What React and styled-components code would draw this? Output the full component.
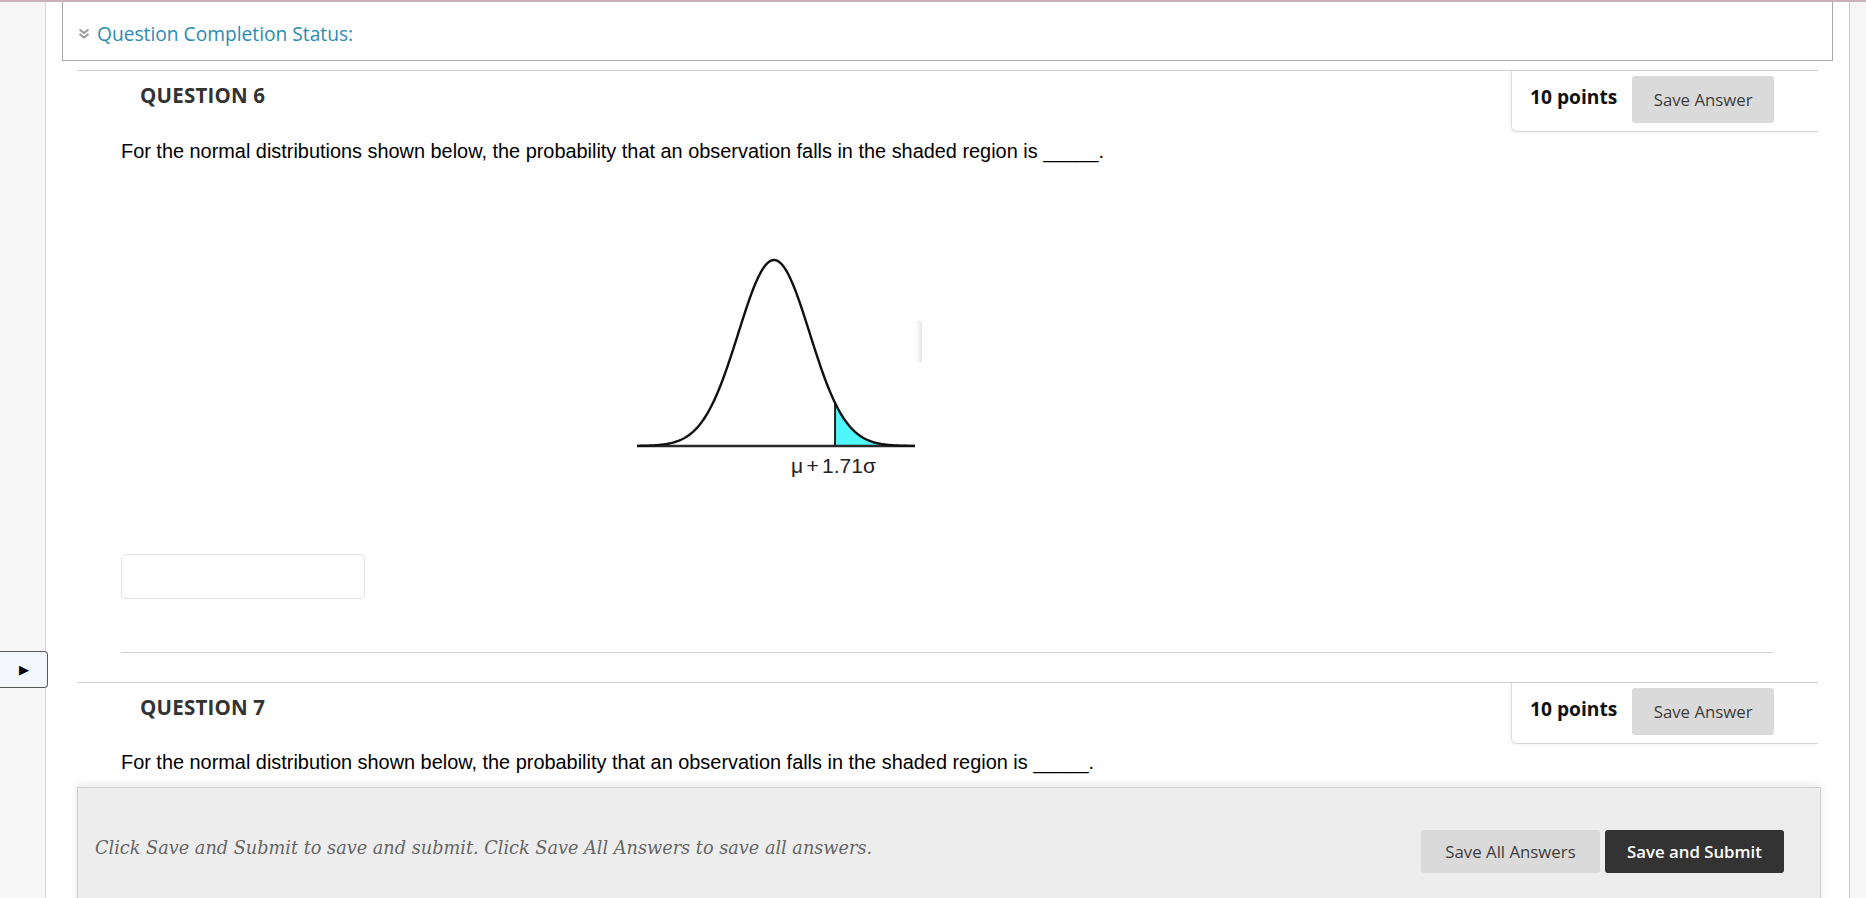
import React from "react";
import styled, { createGlobalStyle } from "styled-components";

const GlobalStyle = createGlobalStyle`
  html, body { margin: 0; padding: 0; background: #ffffff; }
  body { font-family: "Open Sans", "Liberation Sans", sans-serif; }
  * { box-sizing: border-box; }
`;

const Page = styled.div`
  position: relative;
  display: flex;
  height: 898px;
  overflow: hidden;
  border-top: 2px solid #cbb0ba;
`;

const LeftRail = styled.aside`
  position: relative;
  width: 46px;
  flex: 0 0 46px;
  background: #f6f6f6;
  border-right: 1px solid #d9d9d9;
`;

const RightRail = styled.aside`
  width: 17px;
  flex: 0 0 17px;
  background: #f6f6f6;
  border-left: 1px solid #cfcfcf;
`;

const RailToggle = styled.button`
  position: absolute;
  top: 649px;
  left: 0;
  width: 48px;
  height: 37px;
  padding: 0;
  background: #f4f7fb;
  border: 1px solid #5a5a5a;
  border-left: none;
  border-radius: 0 4px 4px 0;
  display: flex;
  align-items: center;
  justify-content: center;
  color: #000;
  font-size: 13px;
  cursor: pointer;
`;

const Main = styled.main`
  flex: 1;
  min-width: 0;
  display: flex;
  flex-direction: column;
  & > * { flex-shrink: 0; }
`;

const StatusBox = styled.div`
  margin: 0 16px;
  height: 59px;
  border: 1px solid #a9a9a9;
  border-top: none;
  display: flex;
  align-items: center;
  gap: 7px;
  padding: 4px 0 0 15px;
  color: #2a8cb2;
  font-size: 19.2px;
`;

const Question = styled.section`
  margin: ${(p) => p.$top}px 31px 0 31px;
`;

const QuestionHeader = styled.div`
  display: flex;
  justify-content: space-between;
  align-items: flex-start;
  border-top: 1px solid #cfcfcf;
`;

const QuestionTitle = styled.h2`
  margin: 0;
  padding: 10px 0 0 63px;
  font-size: 20.5px;
  font-weight: 700;
  color: #333;
  letter-spacing: 0.2px;
`;

const PointsBox = styled.div`
  width: 307px;
  height: 61px;
  display: flex;
  align-items: center;
  gap: 15px;
  padding: 0 44px 3px 18px;
  border-left: 1px solid #dcdcdc;
  border-bottom: 1px solid #d6d6d6;
  border-bottom-left-radius: 6px;
  box-shadow: -1px 1px 3px rgba(0, 0, 0, 0.06);
`;

const Points = styled.span`
  margin-bottom: 6px;
  font-size: 19.2px;
  font-weight: 700;
  color: #111;
  white-space: nowrap;
`;

const GreyButton = styled.button`
  height: ${(p) => p.$h || 47}px;
  width: ${(p) => p.$w}px;
  border: none;
  border-radius: 3px;
  background: ${(p) => (p.$dark ? "#333333" : "#dadada")};
  color: ${(p) => (p.$dark ? "#ffffff" : "#3d3d3d")};
  font-family: "Open Sans", "Liberation Sans", sans-serif;
  font-size: 16.8px;
  font-weight: ${(p) => (p.$dark ? 600 : 400)};
  padding: 0;
  cursor: pointer;
  white-space: nowrap;
`;

const QuestionBody = styled.div`
  padding: 0 45px 0 44px;
`;

const Prompt = styled.p`
  margin: ${(p) => p.$top}px 0 0 0;
  font-family: "Liberation Sans", Arial, sans-serif;
  font-size: 19.9px;
  line-height: 24px;
  color: #000;
`;

const Figure = styled.div`
  margin: 70px 0 0 513px;
  width: 288px;
  height: 244px;
`;

const AnswerInput = styled.input`
  display: block;
  margin-top: 77px;
  width: 244px;
  height: 45px;
  border: 1px solid #e1e1e1;
  border-radius: 5px;
  background: #fff;
  outline: none;
`;

const Separator = styled.hr`
  margin: 53px 0 0 0;
  border: none;
  border-top: 1px solid #cfcfcf;
`;

const Footer = styled.footer`
  margin: 13px 28px 0 31px;
  height: 128px;
  background: #ededed;
  border: 1px solid #cfcfcf;
  box-shadow: 0 -3px 8px rgba(0, 0, 0, 0.08);
  display: flex;
  align-items: center;
  justify-content: space-between;
  padding: 0 36px 0 17px;
`;

const FooterNote = styled.p`
  margin: 0 0 6px 0;
  font-family: "DejaVu Serif", "Liberation Serif", serif;
  font-style: italic;
  font-size: 17.7px;
  color: #666;
`;

const ButtonRow = styled.div`
  display: flex;
  gap: 5px;
`;

const Chevron = () => (
  <svg width="12" height="11" viewBox="0 0 12 11" aria-hidden="true">
    <path d="M1.5 1.5 L6 5 L10.5 1.5" fill="none" stroke="#9a9a9a" strokeWidth="2" />
    <path d="M1.5 6 L6 9.5 L10.5 6" fill="none" stroke="#9a9a9a" strokeWidth="2" />
  </svg>
);

const NormalCurve = () => {
  const base = 213;
  const mu = 140;
  const sigma = 35.7;
  const peak = 186;
  const yAt = (x) => base - peak * Math.exp(-(((x - mu) / sigma) ** 2) / 2);
  const pts = [];
  for (let x = 3; x <= 281; x += 1) pts.push(`${x},${yAt(x).toFixed(2)}`);
  const cut = mu + 1.71 * sigma;
  const shade = [`${cut.toFixed(2)},${base}`];
  for (let x = Math.ceil(cut); x <= 281; x += 1) shade.push(`${x},${yAt(x).toFixed(2)}`);
  shade.push(`281,${base}`);
  return (
    <svg width="288" height="244" viewBox="0 0 288 244" overflow="visible">
      <defs>
        <linearGradient id="edge" x1="0" x2="1" y1="0" y2="0">
          <stop offset="0" stopColor="#ffffff" stopOpacity="0" />
          <stop offset="1" stopColor="#cfcfcf" stopOpacity="0.6" />
        </linearGradient>
      </defs>
      <rect x="279" y="88" width="9" height="42" rx="3" fill="url(#edge)" />
      <polygon points={shade.join(" ")} fill="#4ff6fb" />
      <line x1="3" y1={base} x2="281" y2={base} stroke="#2a2a2a" strokeWidth="2.6" />
      <line x1={cut} y1={base} x2={cut} y2={yAt(cut)} stroke="#222" strokeWidth="2" />
      <polyline points={pts.join(" ")} fill="none" stroke="#111" strokeWidth="2.4" strokeLinejoin="round" />
      <text
        x="157"
        y="240"
        fontFamily="Liberation Sans, Arial, sans-serif"
        fontSize="21"
        wordSpacing="-2.5"
        fill="#222"
      >
        μ + 1.71σ
      </text>
    </svg>
  );
};

export default function App() {
  return (
    <>
      <GlobalStyle />
      <Page>
        <LeftRail>
          <RailToggle aria-label="Open menu">▶</RailToggle>
        </LeftRail>
        <Main>
          <StatusBox>
            <Chevron />
            <span>Question Completion Status:</span>
          </StatusBox>

          <Question $top={9}>
            <QuestionHeader>
              <QuestionTitle>QUESTION 6</QuestionTitle>
              <PointsBox>
                <Points>10 points</Points>
                <GreyButton $w={143}>Save Answer</GreyButton>
              </PointsBox>
            </QuestionHeader>
            <QuestionBody>
              <Prompt $top={7}>
                For the normal distributions shown below, the probability that an observation falls in the shaded region is _____.
              </Prompt>
              <Figure>
                <NormalCurve />
              </Figure>
              <AnswerInput type="text" aria-label="Answer" />
              <Separator />
            </QuestionBody>
          </Question>

          <Question $top={29}>
            <QuestionHeader>
              <QuestionTitle>QUESTION 7</QuestionTitle>
              <PointsBox>
                <Points>10 points</Points>
                <GreyButton $w={143}>Save Answer</GreyButton>
              </PointsBox>
            </QuestionHeader>
            <QuestionBody>
              <Prompt $top={6}>
                For the normal distribution shown below, the probability that an observation falls in the shaded region is _____.
              </Prompt>
            </QuestionBody>
          </Question>

          <Footer>
            <FooterNote>
              Click Save and Submit to save and submit. Click Save All Answers to save all answers.
            </FooterNote>
            <ButtonRow>
              <GreyButton $w={179} $h={43}>Save All Answers</GreyButton>
              <GreyButton $w={179} $h={43} $dark>Save and Submit</GreyButton>
            </ButtonRow>
          </Footer>
        </Main>
        <RightRail />
      </Page>
    </>
  );
}
